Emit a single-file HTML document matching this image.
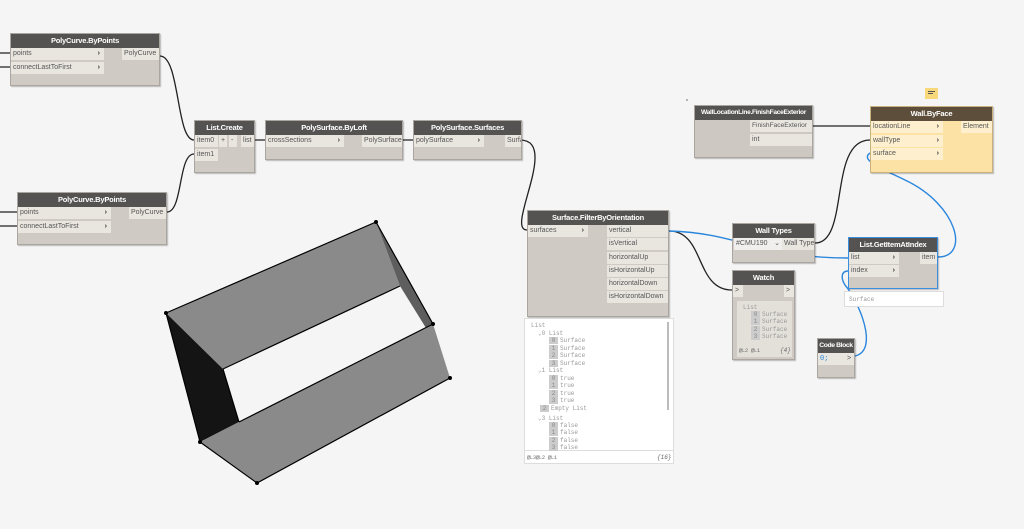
<!DOCTYPE html>
<html><head><meta charset="utf-8"><style>
*{margin:0;padding:0;box-sizing:border-box}
body{width:1024px;height:529px;background:#f5f5f5;position:relative;overflow:hidden;font-family:"Liberation Sans",sans-serif;font-size:8px;color:#444}
.n{position:absolute;background:#cfcbc4;border:1px solid #aaa69f;box-shadow:1px 1px 1px rgba(0,0,0,.25)}
.h{position:absolute;left:0;right:0;top:0;height:14px;background:#555351;color:#fff;font-weight:bold;text-align:center;line-height:14px;font-size:7.5px;letter-spacing:-0.2px;white-space:nowrap;overflow:hidden}
.p{position:absolute;height:12px;line-height:12px;background:#e9e6e0;padding-left:2px;white-space:nowrap;font-size:7px;color:#555;overflow:hidden}
.p b{position:absolute;right:4px;top:0;font-weight:bold;color:#333}
.pv{position:absolute;font-family:"Liberation Mono",monospace;font-size:6px;color:#999;white-space:nowrap}
.ix{display:inline-block;background:#ccc;color:#888;width:9px;text-align:center;margin-right:2px}
svg{position:absolute;left:0;top:0}
</style></head><body>
<svg width="1024" height="529">
<polygon points="376,222 166,313 223,369 400,286" fill="#8a8a8a"/>
<polygon points="376,222 433,324 426,328 400,286" fill="#5e5e5e"/>
<polygon points="166,313 200,442 239,422 223,369" fill="#141414"/>
<polygon points="200,442 239,422 433,324 450,378 257,483" fill="#8a8a8a"/>
<g stroke="#000" stroke-width="1.2" fill="none">
<path d="M166,313 L376,222 L433,324 M200,442 L257,483 L450,378 M166,313 L200,442 M223,369 L400,286 M239,422 L433,324 M223,369 L239,422"/>
</g>
<g fill="#000"><circle cx="376" cy="222" r="2"/><circle cx="166" cy="313" r="2"/><circle cx="433" cy="324" r="2"/><circle cx="450" cy="378" r="2"/><circle cx="257" cy="483" r="2"/><circle cx="200" cy="442" r="2"/></g>
<circle cx="687" cy="100" r="0.8" fill="#666"/>
<g stroke="#222" stroke-width="1.3" fill="none">
<path d="M0,53 L10,53 M0,67 L10,67 M0,212 L17,212 M0,226 L17,226"/>
<path d="M160,56 C180,56 176,140 194,140"/>
<path d="M167,212 C183,212 178,154 194,154"/>
<path d="M255,140 L265,140 M403,140 L413,140 M813,126 L870,126"/>
<path d="M520,140 C560,140 505,230 527,230"/>
<path d="M669,231 C705,231 695,290 732,290"/>
<path d="M815,243 C850,243 828,140 870,140"/>
</g>
<g stroke="#2a86dc" stroke-width="1.4" fill="none">
<path d="M669,231 C740,233 760,258 848,258"/>
<path d="M938,257 C970,257 958,205 905,180 C880,168 860,160 870,153"/>
<path d="M855,356 C880,350 858,300 845,285 C840,277 842,271 848,271"/>
</g>
</svg>

<div class="n" style="left:10px;top:33px;width:150px;height:53px"><div class="h">PolyCurve.ByPoints</div>
<div class="p" style="left:0;top:14px;width:93px">points<b>›</b></div>
<div class="p" style="left:0;top:28px;width:93px">connectLastToFirst<b>›</b></div>
<div class="p" style="right:0;top:14px;width:37px">PolyCurve</div></div>

<div class="n" style="left:17px;top:192px;width:150px;height:53px"><div class="h">PolyCurve.ByPoints</div>
<div class="p" style="left:0;top:14px;width:93px">points<b>›</b></div>
<div class="p" style="left:0;top:28px;width:93px">connectLastToFirst<b>›</b></div>
<div class="p" style="right:0;top:14px;width:37px">PolyCurve</div></div>

<div class="n" style="left:194px;top:120px;width:61px;height:53px"><div class="h">List.Create</div>
<div class="p" style="left:0;top:14px;width:23px">item0</div>
<div class="p" style="left:24px;top:14px;width:8px">+</div>
<div class="p" style="left:34px;top:14px;width:8px">-</div>
<div class="p" style="right:0;top:14px;width:13px">list</div>
<div class="p" style="left:0;top:28px;width:23px">item1</div></div>

<div class="n" style="left:265px;top:120px;width:138px;height:40px"><div class="h">PolySurface.ByLoft</div>
<div class="p" style="left:0;top:14px;width:78px">crossSections<b>›</b></div>
<div class="p" style="right:0;top:14px;width:40px">PolySurface</div></div>

<div class="n" style="left:413px;top:120px;width:109px;height:40px"><div class="h">PolySurface.Surfaces</div>
<div class="p" style="left:0;top:14px;width:70px">polySurface<b>›</b></div>
<div class="p" style="right:0;top:14px;width:16px">Surface[]</div></div>

<div class="n" style="left:527px;top:210px;width:142px;height:107px"><div class="h">Surface.FilterByOrientation</div>
<div class="p" style="left:0;top:14px;width:60px">surfaces<b>›</b></div>
<div class="p" style="right:0;top:14px;width:61px">vertical</div>
<div class="p" style="right:0;top:27px;width:61px">isVertical</div>
<div class="p" style="right:0;top:41px;width:61px">horizontalUp</div>
<div class="p" style="right:0;top:54px;width:61px">isHorizontalUp</div>
<div class="p" style="right:0;top:67px;width:61px">horizontalDown</div>
<div class="p" style="right:0;top:80px;width:61px">isHorizontalDown</div></div>

<div style="position:absolute;left:524px;top:318px;width:150px;height:146px;background:#fff;border:1px solid #ddd">
<div style="position:absolute;right:4px;top:3px;width:2px;height:88px;background:#bbb"></div>
<div style="position:absolute;left:0;right:0;bottom:0;height:13px;border-top:1px solid #ddd"></div>
</div>
<div class="pv" style="left:531px;top:322px">List</div>
<div class="pv" style="left:538px;top:330px">⌄0 List</div>
<div class="pv" style="left:549px;top:337px"><span class="ix">0</span>Surface</div>
<div class="pv" style="left:549px;top:345px"><span class="ix">1</span>Surface</div>
<div class="pv" style="left:549px;top:352px"><span class="ix">2</span>Surface</div>
<div class="pv" style="left:549px;top:360px"><span class="ix">3</span>Surface</div>
<div class="pv" style="left:538px;top:367px">⌄1 List</div>
<div class="pv" style="left:549px;top:375px"><span class="ix">0</span>true</div>
<div class="pv" style="left:549px;top:382px"><span class="ix">1</span>true</div>
<div class="pv" style="left:549px;top:390px"><span class="ix">2</span>true</div>
<div class="pv" style="left:549px;top:397px"><span class="ix">3</span>true</div>
<div class="pv" style="left:540px;top:405px"><span class="ix">2</span>Empty List</div>
<div class="pv" style="left:538px;top:415px">⌄3 List</div>
<div class="pv" style="left:549px;top:422px"><span class="ix">0</span>false</div>
<div class="pv" style="left:549px;top:429px"><span class="ix">1</span>false</div>
<div class="pv" style="left:549px;top:437px"><span class="ix">2</span>false</div>
<div class="pv" style="left:549px;top:444px"><span class="ix">3</span>false</div>
<div class="pv" style="left:527px;top:455px;font-size:5px;color:#666">@L3@L2 @L1</div>
<div class="pv" style="left:657px;top:454px;color:#666;font-style:italic">{16}</div>

<div class="n" style="left:694px;top:105px;width:119px;height:53px;background:#cdc9c2"><div class="h" style="font-size:6.6px;letter-spacing:-0.3px">WallLocationLine.FinishFaceExterior</div>
<div class="p" style="right:0;top:14px;width:62px;font-size:6.6px">FinishFaceExterior</div>
<div class="p" style="right:0;top:28px;width:62px">int</div></div>

<div style="position:absolute;left:925px;top:88px;width:13px;height:11px;background:#f7d97c"><div style="margin:3px 3px 0;height:1px;background:#555;width:7px"></div><div style="margin:1px 3px 0;height:1px;background:#555;width:5px"></div></div>
<div class="n" style="left:870px;top:106px;width:123px;height:67px;background:#fde2a6;border-color:#c9b27d"><div class="h" style="background:#5c4e3a">Wall.ByFace</div>
<div class="p" style="left:0;top:14px;width:72px;background:#fef0cf">locationLine<b>›</b></div>
<div class="p" style="left:0;top:28px;width:72px;background:#fef0cf">wallType<b>›</b></div>
<div class="p" style="left:0;top:41px;width:72px;background:#fef0cf">surface<b>›</b></div>
<div class="p" style="right:0;top:14px;width:31px;background:#fef0cf">Element</div></div>

<div class="n" style="left:732px;top:223px;width:83px;height:40px"><div class="h">Wall Types</div>
<div class="p" style="left:1px;top:14px;width:48px;background:#f0efed">#CMU190 <span style="float:right;margin-right:2px">⌄</span></div>
<div class="p" style="right:0;top:14px;width:32px">Wall Type</div></div>

<div class="n" style="left:732px;top:270px;width:63px;height:90px"><div class="h">Watch</div>
<div class="p" style="left:0;top:14px;width:10px">&gt;</div>
<div class="p" style="right:0;top:14px;width:10px">&gt;</div>
<div style="position:absolute;left:4px;top:30px;width:55px;height:56px;background:#e3e0da"></div></div>
<div class="pv" style="left:743px;top:304px">List</div>
<div class="pv" style="left:751px;top:311px"><span class="ix">0</span>Surface</div>
<div class="pv" style="left:751px;top:318px"><span class="ix">1</span>Surface</div>
<div class="pv" style="left:751px;top:326px"><span class="ix">2</span>Surface</div>
<div class="pv" style="left:751px;top:333px"><span class="ix">3</span>Surface</div>
<div class="pv" style="left:739px;top:348px;font-size:5px;color:#666">@L2 @L1</div>
<div class="pv" style="left:780px;top:347px;color:#666;font-style:italic">{4}</div>

<div class="n" style="left:848px;top:237px;width:90px;height:52px;border:1.5px solid #3a8fe0"><div class="h">List.GetItemAtIndex</div>
<div class="p" style="left:0;top:14px;width:50px">list<b>›</b></div>
<div class="p" style="left:0;top:27px;width:50px">index<b>›</b></div>
<div class="p" style="right:0;top:14px;width:17px">item</div></div>
<div style="position:absolute;left:844px;top:291px;width:100px;height:16px;background:#fff;border:1px solid #ddd"></div>
<div class="pv" style="left:849px;top:296px">Surface</div>

<div class="n" style="left:817px;top:338px;width:38px;height:40px"><div class="h" style="font-size:6.8px;letter-spacing:-0.4px">Code Block</div>
<div class="p" style="left:0;top:14px;width:28px;color:#2a86dc;font-family:'Liberation Mono',monospace">0;</div>
<div class="p" style="right:0;top:14px;width:9px">&gt;</div></div>
</body></html>
